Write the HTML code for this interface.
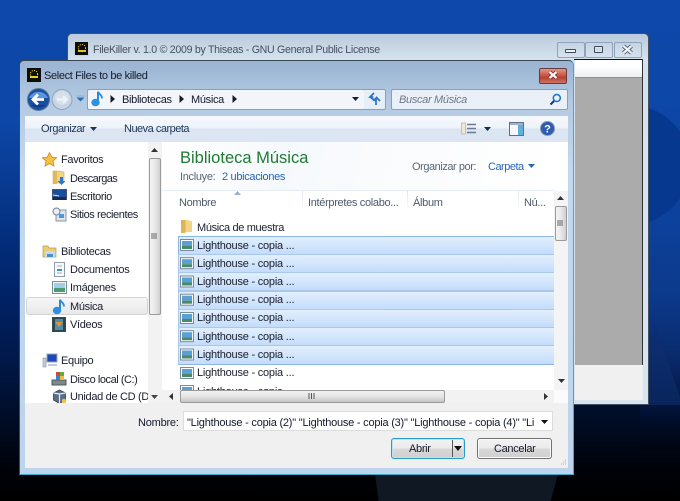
<!DOCTYPE html>
<html><head><meta charset="utf-8">
<style>
html,body{margin:0;padding:0;width:680px;height:501px;overflow:hidden;background:#000}
body{position:relative;font-family:"Liberation Sans",sans-serif;font-size:11px;color:#1c2030;filter:blur(.3px)}
div,svg,span.t{position:absolute}
.t{white-space:nowrap;line-height:14px;height:14px;font-size:11px;letter-spacing:-.32px;color:#1a1e2c}
.l{letter-spacing:-.22px}
.row{left:178px;width:376px;height:17px;border:1px solid #a9c8ea;border-right:0;background:linear-gradient(#e2effd,#c3dcfb);box-sizing:content-box}
.wb{top:42px;width:26px;height:14px;border:1px solid #8fa3ba;border-radius:2px;background:linear-gradient(#c6d4e3,#d6e2ee)}
</style></head><body>
<!-- wallpaper -->
<div style="left:0;top:0;width:680px;height:501px;background:linear-gradient(#0d48aa 0,#0d47a8 120px,#04307f 230px,#002368 290px,#011848 360px,#000c25 420px,#000208 470px,#000 501px)"></div>
<div style="left:640px;top:0;width:40px;height:450px;background:linear-gradient(#0d48aa 0,#0d47a8 100px,#0c419c 220px,#0c3a8c 290px,#0a2c70 350px,#051a4c 395px,#000c25 425px,#000410 450px)"></div>
<div style="left:570px;top:105px;width:120px;height:120px;background:#06388f;border-radius:50%"></div>
<div style="left:649px;top:325px;width:31px;height:80px;background:#0e2f6c;opacity:.6;clip-path:polygon(20% 0,100% 90%,100% 100%,0 100%,0 30%)"></div>
<div style="left:375px;top:474px;width:183px;height:27px;background:#101923;clip-path:polygon(0 0,100% 0,96% 100%,2% 100%)"></div>

<!-- back window -->
<div style="left:67px;top:33px;width:582px;height:372px;box-sizing:border-box;border:1px solid #46505c;border-radius:5px 5px 0 0;background:linear-gradient(#bccbdc 0,#d5e3f0 26px,#d7e5f3 100%)"></div>
<div style="left:575px;top:60px;width:68px;height:340px;background:#f0f0f0"></div>
<div style="left:574px;top:59px;width:68px;height:1px;background:#111"></div>
<div style="left:642px;top:59px;width:1px;height:306px;background:#333"></div>
<div style="left:575px;top:60px;width:67px;height:17px;background:linear-gradient(#fff,#fff 40%,#eceef0)"></div>
<div style="left:575px;top:77px;width:67px;height:288px;background:#ababab;border-top:1px solid #909090;box-sizing:border-box"></div>
<div style="left:74px;top:41px;width:15px;height:15px;background:#0c0c08;border:1px solid #c8d4e0;box-sizing:border-box"></div>
<svg style="left:76px;top:44px" width="12" height="10"><circle cx="6" cy="4" r="3.6" fill="none" stroke="#d8c820" stroke-width="1" stroke-dasharray="1.2 1.2"/><rect x="2" y="6" width="8" height="2" fill="#d8c820"/></svg>
<span class="t" style="left:93px;top:43px;color:#465060;font-size:10.6px;letter-spacing:-.28px">FileKiller v. 1.0 © 2009 by Thiseas - GNU General Public License</span>
<div class="wb" style="left:557px"></div><div class="wb" style="left:585px"></div><div class="wb" style="left:614px"></div>
<div style="left:565px;top:49px;width:9px;height:2px;border:1px solid #3c4a5c;background:#eef2f6;border-radius:1px"></div>
<div style="left:594px;top:46px;width:7px;height:5px;border:1px solid #3c4a5c;border-radius:1px;box-shadow:inset 0 0 0 1px #dde6ef"></div>
<svg style="left:621px;top:44px" width="13" height="11"><path d="M2.500 2 L10.500 9 M10.500 2 L2.500 9" stroke="#46566a" stroke-width="4"/><path d="M2.500 2 L10.500 9 M10.500 2 L2.500 9" stroke="#eef3f8" stroke-width="2.200"/></svg>

<!-- dialog frame -->
<div style="left:19px;top:60px;width:555px;height:415px;box-sizing:border-box;border:1px solid #3c4650;border-bottom-color:#3fa9c9;border-right-color:#3fa9c9;border-radius:5px 5px 0 0;background:linear-gradient(#9ab4d2 0,#b3cae2 40px,#c2d8ee 110px,#bcd4ec 100%)"></div>
<div style="left:27px;top:68px;width:14px;height:14px;background:#0c0c08"></div>
<svg style="left:28px;top:70px" width="12" height="10"><circle cx="6" cy="4" r="3.6" fill="none" stroke="#e4d41a" stroke-width="1" stroke-dasharray="1.2 1.2"/><rect x="2" y="6" width="8" height="2" fill="#e4d41a"/></svg>
<span class="t" style="left:44px;top:69px;color:#141c2a;letter-spacing:-.36px">Select Files to be killed</span>
<!-- close -->
<div style="left:539px;top:68px;width:26px;height:14px;border:1px solid #6a3a3a;border-radius:2px;background:linear-gradient(#dd9a8c,#c8503e 50%,#b8402f 60%,#cf7564)"></div>
<svg style="left:546px;top:69px" width="14" height="12"><path d="M3.500 3 L10.500 9 M10.500 3 L3.500 9" stroke="#7a3030" stroke-width="4"/><path d="M3.500 3 L10.500 9 M10.500 3 L3.500 9" stroke="#f8f2f0" stroke-width="2.400"/></svg>

<!-- nav buttons -->
<svg style="left:26px;top:87px" width="62" height="25">
<circle cx="36" cy="12.500" r="10" fill="#c6d4e4" stroke="#8ea3ba"/><circle cx="36" cy="11" r="7" fill="#d6e0ec"/>
<path d="M31 12.500h9M37 9l3.500 3.500L37 16" stroke="#eef3f8" stroke-width="2.200" fill="none"/>
<circle cx="12.500" cy="12.500" r="11" fill="#1a4ea2" stroke="#5c7a9c"/><path d="M3 11a10 9 0 0 1 19 0z" fill="#5c93dc"/><path d="M5 18a9 5 0 0 0 15 0z" fill="#0f3a88"/>
<path d="M7 12.500h11M12 7.500l-5 5 5 5" stroke="#fff" stroke-width="2.800" fill="none"/>
<path d="M50.500 10.500 h8 l-4 4z" fill="#2a6cb8"/><path d="M50.500 9 h8" stroke="#88aed6" stroke-width="1"/>
</svg>
<!-- address bar -->
<div style="left:87px;top:89px;width:276px;height:19px;border:1px solid #8ba0b8;border-radius:2px;background:#f2f6fb"></div>
<div style="left:364px;top:89px;width:21px;height:19px;border:1px solid #8ba0b8;border-left:0;border-radius:0 2px 2px 0;background:#e6eef8"></div>
<svg style="left:90px;top:90px" width="14" height="18"><path d="M8 2v10" stroke="#2d8ad8" stroke-width="2"/><ellipse cx="5.500" cy="12.500" rx="4.200" ry="3.800" fill="#2f8fe0"/><path d="M8 1.500c1 3 4 3 4 7" stroke="#2d8ad8" stroke-width="1.800" fill="none"/></svg>
<svg style="left:110px;top:95px" width="6" height="8"><path d="M0.500 0l4.500 4-4.500 4z" fill="#1a1a22"/></svg>
<span class="t" style="left:122px;top:93px;color:#14182a">Bibliotecas</span>
<svg style="left:179px;top:95px" width="6" height="8"><path d="M0.500 0l4.500 4-4.500 4z" fill="#1a1a22"/></svg>
<span class="t" style="left:191px;top:93px;color:#14182a">Música</span>
<svg style="left:232px;top:95px" width="6" height="8"><path d="M0.500 0l4.500 4-4.500 4z" fill="#1a1a22"/></svg>
<svg style="left:352px;top:97px" width="8" height="5"><path d="M0 0h7l-3.500 4z" fill="#141a40"/></svg>
<svg style="left:367px;top:92px" width="16" height="14"><path d="M7 1L3 5h2.500c0 2 .5 3 2 3.500M3 5l4 3" stroke="#2a70c0" stroke-width="1.600" fill="none"/><path d="M9 13V7M6.500 9L9.500 5.500 13 9" stroke="#2a70c0" stroke-width="1.700" fill="none"/></svg>
<!-- search -->
<div style="left:391px;top:89px;width:175px;height:19px;border:1px solid #8ba0b8;border-radius:2px;background:#e9f0f8"></div>
<span class="t" style="left:399px;top:93px;font-style:italic;color:#6d7888">Buscar Música</span>
<svg style="left:549px;top:93px" width="13" height="13"><circle cx="7.800" cy="5" r="3.500" fill="#e8f2fb" stroke="#1e70c0" stroke-width="1.500"/><path d="M5 8L1.500 11.500" stroke="#103a78" stroke-width="2"/></svg>

<!-- toolbar -->
<div style="left:25px;top:116px;width:543px;height:26px;background:linear-gradient(#f6f9fd 0,#eef3fa 45%,#dce6f3 50%,#dbe5f3 100%)"></div>
<span class="t" style="left:41px;top:122px;color:#1e3558;letter-spacing:-.45px">Organizar</span>
<svg style="left:90px;top:127px" width="8" height="5"><path d="M0 0h7l-3.500 4z" fill="#1e3558"/></svg>
<span class="t" style="left:124px;top:122px;color:#1e3558;letter-spacing:-.5px">Nueva carpeta</span>
<svg style="left:461px;top:122px" width="16" height="13"><rect x="0.500" y="1" width="4" height="11" fill="#f4e8d0" stroke="#b8c0cc"/><path d="M6 2.500h9M6 6.500h9M6 10.500h9" stroke="#6a7a90" stroke-width="1.400"/></svg>
<svg style="left:484px;top:127px" width="8" height="5"><path d="M0 0h7l-3.500 4z" fill="#142a50"/></svg>
<svg style="left:509px;top:122px" width="15" height="14"><rect x="0.500" y="0.500" width="14" height="13" fill="#f6f8fb" stroke="#5e7088"/><rect x="9" y="1" width="5" height="12" fill="#5fb0da"/><rect x="1" y="1" width="13" height="2" fill="#9fb4cc"/></svg>
<svg style="left:540px;top:121px" width="15" height="15"><circle cx="7.500" cy="7.500" r="7" fill="#2a5cb0" stroke="#8a94a4" stroke-width="1"/><text x="7.500" y="11.500" font-family="Liberation Sans" font-weight="bold" font-size="11" fill="#fff" text-anchor="middle">?</text></svg>

<!-- nav pane -->
<div style="left:25px;top:142px;width:137px;height:261px;background:#fff"></div>
<div style="left:148px;top:142px;width:14px;height:261px;background:#f2f2f2"></div>
<div style="left:149px;top:158px;width:12px;height:157px;box-sizing:border-box;border:1px solid #9a9a9a;border-radius:2px;background:linear-gradient(90deg,#f4f4f4,#e8e8e8 50%,#cfcfcf)"></div>
<svg style="left:150px;top:233px" width="8" height="7"><path d="M1 1h6M1 3h6M1 5h6" stroke="#666" stroke-width="1"/></svg>
<svg style="left:151px;top:148px" width="7" height="5"><path d="M0 4h7L3.500 0z" fill="#333"/></svg>
<svg style="left:151px;top:395px" width="7" height="5"><path d="M0 0h7L3.500 4z" fill="#444"/></svg>

<svg style="left:42px;top:152px" width="15" height="15"><path d="M7.500 0.500l2.200 4.600 5 .6-3.700 3.400 1 5-4.500-2.500-4.500 2.500 1-5L.300 5.700l5-.6z" fill="#f4c040" stroke="#d8802a" stroke-width="0.800"/></svg>
<span class="t" style="left:61px;top:153px">Favoritos</span>
<svg style="left:52px;top:170px" width="15" height="15"><path d="M1 1h6l5 1v11H1z" fill="#f0d488" stroke="#c8a850" stroke-width=".6"/><path d="M1 1h4v13H1z" fill="#dfb95c"/><path d="M8 7h3v4h2.500L9.500 15 5.500 11H8z" fill="#2a78cc"/></svg>
<span class="t" style="left:70px;top:172px;letter-spacing:-.6px">Descargas</span>
<svg style="left:52px;top:189px" width="15" height="13"><rect x="0.500" y="0.500" width="14" height="10" fill="#1c4ea0" stroke="#44546a"/><rect x="1" y="8" width="13" height="3" fill="#1a2a4a"/><path d="M1 6l6 1" stroke="#d8e4f0"/></svg>
<span class="t" style="left:70px;top:190px;letter-spacing:-.4px">Escritorio</span>
<svg style="left:52px;top:207px" width="15" height="15"><rect x="4" y="3" width="10" height="11" fill="#dfe4ea" stroke="#8a96a4"/><circle cx="4.500" cy="4.500" r="3.500" fill="#e8eef4" stroke="#748496"/><rect x="7" y="7" width="5" height="4" fill="#4a9ad8"/></svg>
<span class="t" style="left:70px;top:208px;letter-spacing:-.42px">Sitios recientes</span>

<svg style="left:42px;top:244px" width="15" height="15"><path d="M1 2h5l1 2h7v9H1z" fill="#e8cc78" stroke="#b89a48" stroke-width="0.700"/><path d="M3 7h10v6H3z" fill="#bfdcf0"/><path d="M5 13v-3h6v3" fill="#4a90c8"/></svg>
<span class="t" style="left:61px;top:245px">Bibliotecas</span>
<svg style="left:53px;top:262px" width="13" height="15"><rect x="1.500" y="0.500" width="10" height="14" fill="#f8fafc" stroke="#8e9cac"/><path d="M4 7h5v2H4z" fill="#3a8ad0"/><path d="M4 4h5M4 11h5" stroke="#9eb0c4"/></svg>
<span class="t l" style="left:70px;top:263px">Documentos</span>
<svg style="left:52px;top:281px" width="15" height="13"><rect x="0.500" y="0.500" width="14" height="12" fill="#f4f6f8" stroke="#7d8a98"/><rect x="2" y="2" width="11" height="5" fill="#a0cde8"/><rect x="2" y="7" width="11" height="4" fill="#4e9a70"/></svg>
<span class="t" style="left:70px;top:281px">Imágenes</span>
<div style="left:26px;top:297px;width:122px;height:18px;box-sizing:border-box;border:1px solid #d4d4d4;border-radius:3px;background:linear-gradient(#f6f6f6,#e8e8e8)"></div>
<svg style="left:52px;top:298px" width="14" height="17"><path d="M8 2v10" stroke="#2d8ad8" stroke-width="2"/><ellipse cx="5" cy="12.500" rx="4.200" ry="3.800" fill="#2f8fe0"/><path d="M8 1.500c1 3 4 3 4 7" stroke="#2d8ad8" stroke-width="1.800" fill="none"/></svg>
<span class="t" style="left:70px;top:300px">Música</span>
<svg style="left:52px;top:317px" width="14" height="15"><rect x="0.500" y="0.500" width="13" height="14" fill="#2e4450" stroke="#3a4a52"/><rect x="3" y="2" width="8" height="11" fill="#4a90a8"/><path d="M3 5h8l-4 5z" fill="#e09038"/></svg>
<span class="t" style="left:70px;top:318px">Vídeos</span>
<svg style="left:42px;top:353px" width="16" height="15"><rect x="5" y="1" width="10" height="8" fill="#1c48b8" stroke="#9aa6b4"/><rect x="1" y="5" width="3" height="9" fill="#c4ccd4" stroke="#8a96a4" stroke-width="0.600"/><rect x="6" y="11" width="9" height="2" fill="#c4ccd4"/></svg>
<span class="t" style="left:61px;top:354px">Equipo</span>
<svg style="left:51px;top:371px" width="16" height="15"><rect x="1" y="9" width="14" height="5" fill="#7c8a8c" stroke="#4c5a62"/><rect x="5" y="1" width="4" height="4" fill="#d84830"/><rect x="9" y="1" width="4" height="4" fill="#5cae48"/><rect x="5" y="5" width="4" height="4" fill="#3a80d8"/><rect x="9" y="5" width="4" height="4" fill="#f0c030"/></svg>
<span class="t" style="left:70px;top:373px;letter-spacing:-.45px">Disco local (C:)</span>
<svg style="left:52px;top:389px" width="15" height="15"><path d="M7.500 1l6 3v7l-6 3.500-6-3.500V4z" fill="#5a6e88" stroke="#334058" stroke-width="0.800"/><path d="M7.500 5l6-1M7.500 5l-6-1M7.500 5v9" stroke="#e6ecf4" stroke-width="1.200"/><circle cx="12" cy="12" r="2.200" fill="#f2c63a"/></svg>
<span class="t" style="left:70px;top:390px;width:78px;overflow:hidden">Unidad de CD (D:</span>

<!-- main pane -->
<div style="left:162px;top:142px;width:406px;height:261px;background:#fff"></div>
<div style="left:162px;top:142px;width:392px;height:48px;background:linear-gradient(100deg,#fff 0,#f6f9fc 30%,#fff 100%)"></div>
<span class="t" style="left:180px;top:148px;height:20px;line-height:20px;font-size:16.500px;letter-spacing:0;color:#1f7a32">Biblioteca Música</span>
<span class="t" style="left:180px;top:170px;color:#586676">Incluye:</span>
<span class="t" style="left:222px;top:170px;color:#2266b8">2 ubicaciones</span>
<span class="t" style="left:412px;top:160px;color:#5a6878;letter-spacing:-.45px">Organizar por:</span>
<span class="t" style="left:488px;top:160px;color:#2a66b8;letter-spacing:-.5px">Carpeta</span>
<svg style="left:528px;top:164px" width="8" height="5"><path d="M0 0h7l-3.500 4z" fill="#2a66b8"/></svg>
<!-- col headers -->
<div style="left:302px;top:191px;width:1px;height:20px;background:linear-gradient(#e0e6ee,#fff)"></div>
<div style="left:407px;top:191px;width:1px;height:20px;background:linear-gradient(#e0e6ee,#fff)"></div>
<div style="left:518px;top:191px;width:1px;height:20px;background:linear-gradient(#e0e6ee,#fff)"></div>
<div style="left:162px;top:190px;width:392px;height:1px;background:#e6edf5"></div>
<svg style="left:234px;top:191px" width="8" height="4"><path d="M0 4h7L3.500 0z" fill="#9cb0c6"/></svg>
<span class="t" style="left:179px;top:196px;color:#4c5a6c">Nombre</span>
<span class="t" style="left:308px;top:196px;color:#4c5a6c">Intérpretes colabo...</span>
<span class="t" style="left:413px;top:196px;color:#4c5a6c">Álbum</span>
<span class="t" style="left:524px;top:196px;color:#4c5a6c">Nú...</span>
<!-- rows -->
<svg style="left:180px;top:219px" width="14" height="15"><path d="M1 1h5l6 1v11H1z" fill="#f0d488"/><path d="M1 1h4.500v13H1z" fill="#dcb650"/></svg>
<span class="t" style="left:197px;top:221px;letter-spacing:-.35px">Música de muestra</span>
<div class="row" style="top:236px;border-color:#8db6e4"></div>
<div class="row" style="top:254px"></div>
<div class="row" style="top:272px"></div>
<div class="row" style="top:291px"></div>
<div class="row" style="top:309px"></div>
<div class="row" style="top:327px"></div>
<div class="row" style="top:345px;height:18px;border-bottom-color:#8db6e4"></div>
<svg style="left:180px;top:239px" width="14" height="130" fill="none">
<g id="ic"><rect x="0.500" y="0.500" width="13" height="11" fill="#f8fafb" stroke="#7d8a98"/><rect x="2" y="2" width="10" height="5" fill="#5aa0d4"/><rect x="2" y="7" width="10" height="3" fill="#4a8a68"/></g>
<use href="#ic" y="18.200"/><use href="#ic" y="36.500"/><use href="#ic" y="54.700"/><use href="#ic" y="73"/><use href="#ic" y="91.200"/><use href="#ic" y="109.500"/></svg>
<svg style="left:180px;top:367px" width="14" height="12"><use href="#ic"/></svg>
<span class="t l" style="left:197px;top:239px">Lighthouse - copia ...</span>
<span class="t l" style="left:197px;top:257px">Lighthouse - copia ...</span>
<span class="t l" style="left:197px;top:275px">Lighthouse - copia ...</span>
<span class="t l" style="left:197px;top:293px">Lighthouse - copia ...</span>
<span class="t l" style="left:197px;top:311px">Lighthouse - copia ...</span>
<span class="t l" style="left:197px;top:330px">Lighthouse - copia ...</span>
<span class="t l" style="left:197px;top:348px">Lighthouse - copia ...</span>
<span class="t l" style="left:197px;top:366px">Lighthouse - copia ...</span>
<div style="left:180px;top:385px;width:120px;height:5px;overflow:hidden"><svg style="left:0;top:0" width="14" height="5"><use href="#ic"/></svg><span class="t l" style="left:17px;top:0">Lighthouse - copia ...</span></div>
<!-- v scrollbar -->
<div style="left:554px;top:191px;width:14px;height:199px;background:#f4f4f4"></div>
<svg style="left:557px;top:196px" width="7" height="5"><path d="M0 4h7L3.500 0z" fill="#333"/></svg>
<div style="left:555px;top:206px;width:12px;height:35px;box-sizing:border-box;border:1px solid #9a9a9a;border-radius:2px;background:linear-gradient(90deg,#f4f4f4,#e8e8e8 50%,#cfcfcf)"></div>
<svg style="left:556px;top:220px" width="9" height="7"><path d="M1 1h6M1 3h6M1 5h6" stroke="#666"/></svg>
<svg style="left:558px;top:379px" width="7" height="5"><path d="M0 0h7L3.500 4z" fill="#333"/></svg>
<!-- h scrollbar -->
<div style="left:162px;top:390px;width:392px;height:13px;background:#f2f2f2"></div>
<div style="left:554px;top:390px;width:14px;height:13px;background:#fbfbfb"></div>
<svg style="left:169px;top:393px" width="5" height="7"><path d="M4 0v7L0 3.500z" fill="#333"/></svg>
<div style="left:180px;top:390px;width:265px;height:13px;box-sizing:border-box;border:1px solid #9a9a9a;border-radius:2px;background:linear-gradient(#f2f2f2,#e4e4e4 50%,#c6c6c6)"></div>
<svg style="left:308px;top:392px" width="8" height="8"><path d="M1 1v6M3.500 1v6M6 1v6" stroke="#555"/></svg>
<svg style="left:544px;top:393px" width="5" height="7"><path d="M0 0v7l4-3.500z" fill="#333"/></svg>

<!-- bottom -->
<div style="left:25px;top:403px;width:543px;height:65px;background:#f0f0f0"></div>
<span class="t l" style="left:138px;top:416px;color:#14182a">Nombre:</span>
<div style="left:183px;top:411px;width:370px;height:20px;box-sizing:border-box;border:1px solid #dcdcdc;background:#fff"></div>
<span class="t l" style="left:187px;top:416px;width:350px;overflow:hidden;color:#14182a">"Lighthouse - copia (2)" "Lighthouse - copia (3)" "Lighthouse - copia (4)" "Li</span>
<svg style="left:541px;top:420px" width="8" height="5"><path d="M0 0h7l-3.500 4z" fill="#111"/></svg>
<div style="left:391px;top:438px;width:74px;height:21px;box-sizing:border-box;border:1px solid #2a9bc8;border-radius:3px;background:linear-gradient(#f2f2f2,#ebebeb 48%,#d8d8d8 52%,#cfcfcf);box-shadow:inset 0 0 0 1px #b6e4f6"></div>
<div style="left:452px;top:440px;width:1px;height:17px;background:#555"></div>
<svg style="left:454px;top:446px" width="9" height="6"><path d="M0 0h8l-4 5z" fill="#111"/></svg>
<span class="t" style="left:409px;top:442px;color:#14182a">Abrir</span>
<div style="left:477px;top:438px;width:75px;height:21px;box-sizing:border-box;border:1px solid #707070;border-radius:3px;background:linear-gradient(#f2f2f2,#ebebeb 48%,#d8d8d8 52%,#cfcfcf);box-shadow:inset 0 0 0 1px #fbfbfb"></div>
<span class="t" style="left:494px;top:442px;color:#14182a">Cancelar</span>
<svg style="left:559px;top:459px" width="8" height="8"><path d="M6 1h1M4 3h1M6 3h1M2 5h1M4 5h1M6 5h1" stroke="#b4b4b4"/></svg>
</body></html>
